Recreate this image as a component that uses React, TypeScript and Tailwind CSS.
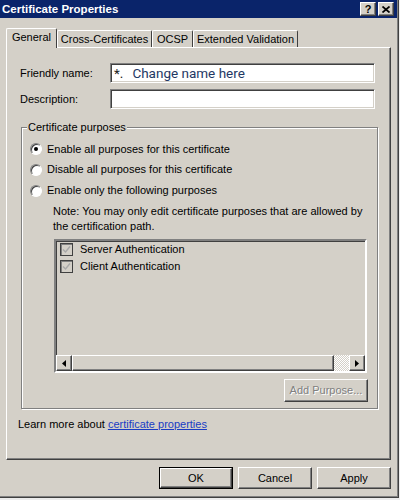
import React from 'react'

// classic 3D bevels
const raised =
  'bg-[#d4d0c8] border border-t-white border-l-white border-r-[#404040] border-b-[#404040] shadow-[inset_-1px_-1px_0_#808080]'
const sunken =
  'border border-t-[#808080] border-l-[#808080] border-r-white border-b-white shadow-[inset_1px_1px_0_#404040,inset_-1px_-1px_0_#d4d0c8]'

const TitleButton: React.FC<{ children: React.ReactNode }> = ({ children }) => (
  <div className={`${raised} w-[16px] h-[14px] flex items-center justify-center`}>{children}</div>
)

const Tab: React.FC<{ label: string; active?: boolean; className: string }> = ({ label, active, className }) => (
  <div
    className={`${className} flex items-center justify-center rounded-t-[2px] border-t border-l border-r border-t-white border-l-white border-r-[#404040] bg-[#d4d0c8] ${
      active ? 'h-[20px] -mb-px relative z-10 pb-[2px]' : 'h-[17px]'
    }`}
  >
    {label}
  </div>
)

const Radio: React.FC<{ checked?: boolean; label: string; className: string }> = ({ checked, label, className }) => (
  <div className={`${className} flex items-center gap-[5px] pl-[8px]`}>
    <div
      className={`w-[12px] h-[12px] rounded-full bg-white border border-t-[#808080] border-l-[#808080] border-r-white border-b-white shadow-[inset_1px_1px_0_#404040] flex items-center justify-center`}
    >
      {checked && <div className="w-[4px] h-[4px] rounded-full bg-black" />}
    </div>
    <span>{label}</span>
  </div>
)

const CheckItem: React.FC<{ label: string }> = ({ label }) => (
  <div className="h-[17px] flex items-center gap-[7px] pl-[4px]">
    <div className="w-[13px] h-[13px] border border-[#404040] shadow-[inset_1px_1px_0_#808080] bg-[#d4d0c8] flex items-center justify-center">
      <svg width="9" height="9" viewBox="0 0 9 9">
        <path d="M1 4.5 L3.5 7 L8 1.5" fill="none" stroke="#a8a8a8" strokeWidth="1.4" />
      </svg>
    </div>
    <span>{label}</span>
  </div>
)

const ScrollArrow: React.FC<{ dir: 'left' | 'right' }> = ({ dir }) => (
  <div className={`${raised} w-[16px] h-[16px] flex items-center justify-center`}>
    <svg width="4" height="7" viewBox="0 0 4 7">
      {dir === 'left' ? <path d="M4 0 L0 3.5 L4 7 Z" fill="#000" /> : <path d="M0 0 L4 3.5 L0 7 Z" fill="#000" />}
    </svg>
  </div>
)

export default function App() {
  return (
    <div className="w-[400px] h-[500px] bg-[#ececec] font-['Liberation_Sans',Arial,sans-serif] text-[11px] text-black leading-[13px]">
      <div className="w-[399px] h-[498px] bg-[#d4d0c8] border-r border-b border-r-[#404040] border-b-[#404040] shadow-[inset_-1px_-1px_0_#808080] flex flex-col">
        {/* Title bar */}
        <div className="h-[18px] w-[397px] bg-[#0a246a] flex items-center justify-between pl-[2px] pr-[3px]">
          <span className="text-white font-bold text-[11.5px]">Certificate Properties</span>
          <div className="flex gap-[2px]">
            <TitleButton>
              <span className="font-bold text-[11px] leading-none">?</span>
            </TitleButton>
            <TitleButton>
              <svg width="8" height="7" viewBox="0 0 8 7">
                <path d="M0.5 0.5 L7.5 6.5 M7.5 0.5 L0.5 6.5" stroke="#000" strokeWidth="1.7" />
              </svg>
            </TitleButton>
          </div>
        </div>

        <div className="pt-[10px] pl-[6px] flex flex-col">
          {/* Tabs */}
          <div className="flex items-end h-[19px]">
            <Tab label="General" active className="w-[51px]" />
            <Tab label="Cross-Certificates" className="w-[95px]" />
            <Tab label="OCSP" className="w-[41px]" />
            <Tab label="Extended Validation" className="w-[105px]" />
          </div>

          {/* Panel */}
          <div className="w-[385px] h-[413px] border border-t-white border-l-white border-r-[#404040] border-b-[#404040] shadow-[inset_-1px_-1px_0_#808080] flex flex-col">
            <div className="pt-[15px] pl-[13px] flex flex-col gap-[6px]">
              <div className="flex items-center">
                <span className="w-[90px]">Friendly name:</span>
                <div className={`${sunken} bg-white w-[265px] h-[20px] flex items-center pl-[3px] font-['Roboto',sans-serif] text-[13.5px]`}>
                  <span className="text-[#222]">*.</span>
                  <span className="ml-[9px] text-[#1f3864]">Change name here</span>
                </div>
              </div>
              <div className="flex items-center">
                <span className="w-[90px]">Description:</span>
                <div className={`${sunken} bg-white w-[265px] h-[20px]`} />
              </div>
            </div>

            {/* Group box */}
            <div className="mt-[18px] ml-[14px] w-[357px] border border-[#808080] shadow-[inset_1px_1px_0_#fff,1px_1px_0_#fff] flex flex-col">
              <span className="-mt-[7px] ml-[5px] px-[1px] w-fit bg-[#d4d0c8]">Certificate purposes</span>
              <div className="mt-[5px] flex flex-col">
                <Radio checked label="Enable all purposes for this certificate" className="h-[20px]" />
                <Radio label="Disable all purposes for this certificate" className="h-[21px]" />
                <Radio label="Enable only the following purposes" className="h-[21px]" />
              </div>
              <p className="mt-[3px] ml-[31px] leading-[15px]">
                Note: You may only edit certificate purposes that are allowed by
                <br />
                the certification path.
              </p>
              <div className="ml-[32px] w-[313px] mt-[5px] flex flex-col items-end pb-[6px]">
                <div className="w-[313px] h-[134px] border-2 border-t-[#808080] border-l-[#808080] border-r-white border-b-white shadow-[inset_1px_1px_0_#404040,inset_-1px_-1px_0_#d4d0c8] bg-[#d4d0c8] flex flex-col">
                  <div className="flex-1 flex flex-col">
                    <CheckItem label="Server Authentication" />
                    <CheckItem label="Client Authentication" />
                  </div>
                  <div className="h-[16px] flex">
                    <ScrollArrow dir="left" />
                    <div className={`${raised} w-[262px] h-[16px]`} />
                    <div className="flex-1 h-[16px] bg-[repeating-conic-gradient(#ffffff_0%_25%,#d4d0c8_0%_50%)] bg-[length:2px_2px]" />
                    <ScrollArrow dir="right" />
                  </div>
                </div>
                <div className={`${raised} mt-[6px] mr-[-1px] w-[84px] h-[23px] flex items-center justify-center text-[#808080] [text-shadow:1px_1px_0_#fff]`}>
                  Add Purpose...
                </div>
              </div>
            </div>

            <div className="mt-[9px] pl-[11px]">
              Learn more about <span className="text-[#1a3cc4] underline">certificate properties</span>
            </div>
          </div>

          {/* Dialog buttons */}
          <div className="mt-[7px] w-[385px] flex justify-end gap-[5px]">
            <div className="w-[74px] h-[22px] border border-black">
              <div className={`${raised} w-full h-full flex items-center justify-center`}>OK</div>
            </div>
            <div className={`${raised} w-[74px] h-[22px] flex items-center justify-center`}>Cancel</div>
            <div className={`${raised} w-[74px] h-[22px] flex items-center justify-center`}>Apply</div>
          </div>
        </div>
      </div>
    </div>
  )
}
